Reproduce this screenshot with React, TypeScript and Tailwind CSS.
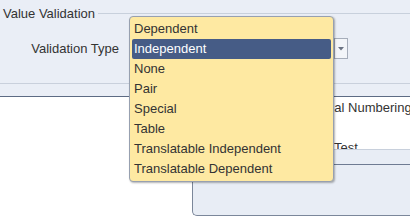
import React from 'react';

const options = [
    'Dependent',
    'Independent',
    'None',
    'Pair',
    'Special',
    'Table',
    'Translatable Independent',
    'Translatable Dependent',
];

export default function App() {
    const selected = 'Independent';

    return (
        <div className="relative w-[410px] h-[219px] overflow-hidden bg-[#eaeef6] font-['Liberation_Sans',Arial,sans-serif] text-[13px] text-[#333]">
            {/* Value Validation section */}
            <div className="h-[84px] border-b border-[#c9d0dc]">
                <div className="flex items-center gap-[3px] pt-[6px] pl-[3px]">
                    <span className="leading-[16px] whitespace-nowrap">Value Validation</span>
                    <div className="flex-1 h-px bg-[#c8d0dc] mb-[2px]" />
                </div>
                <div className="flex items-center h-[21px] mt-[16px]">
                    <div className="w-[119px] text-right whitespace-nowrap">Validation Type</div>
                    <div className="ml-[10px] w-[204px] h-[21px] bg-white border border-[#a6adba]" />
                    <div className="ml-[1px] w-[14px] h-[21px] flex items-center justify-center bg-[#f3f5f9] border border-[#a6adba]">
                        <svg width="6" height="4" viewBox="0 0 6 4">
                            <path d="M0 0 L6 0 L3 3.5 Z" fill="#6b7383" />
                        </svg>
                    </div>
                </div>
            </div>
            <div className="h-[13px] border-b border-[#5d6b84]" />

            {/* content below */}
            <div className="bg-white h-[122px]">
                <div className="h-[52px] overflow-hidden pt-[3px] pl-[283px] leading-[16px] whitespace-nowrap">
                    <div>Sequential Numbering</div>
                    <div className="mt-[24px] pl-[51px]">Test</div>
                </div>
                <div className="ml-[192px] border-l border-b border-[#7b879a] rounded-bl-[5px] bg-[#e8edf5]">
                    <div className="h-[16px] border-t border-b border-t-[#c8d0dc] border-b-[#6e7b92]" />
                    <div className="h-[50px]" />
                </div>
            </div>

            {/* open dropdown list */}
            <div className="absolute left-[129px] top-[16px] w-[205px] h-[166px] bg-[#fee9a2] border border-[#97a0b0] rounded-[4px] shadow-[1px_1px_2px_rgba(0,0,0,0.3)] p-[2px]">
                {options.map((o) => (
                    <div
                        key={o}
                        className={`h-[20px] leading-[20px] pl-[2px] whitespace-nowrap ${
                            o === selected ? 'bg-[#465c86] text-white rounded-[2px]' : 'text-[#333]'
                        }`}
                    >
                        {o}
                    </div>
                ))}
            </div>
        </div>
    );
}
